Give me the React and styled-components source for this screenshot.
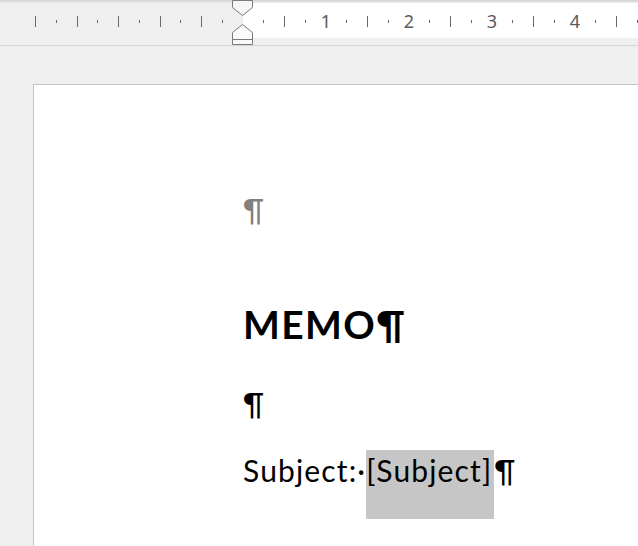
import React from 'react'
import styled, { createGlobalStyle } from 'styled-components'

const GlobalStyle = createGlobalStyle`
  html, body {
    margin: 0;
    padding: 0;
    width: 638px;
    height: 546px;
    overflow: hidden;
    background: #efefef;
  }
`

const Window = styled.div`
  width: 638px;
  height: 546px;
  display: flex;
  flex-direction: column;
  background: #efefef;
  overflow: hidden;
`

const RulerBar = styled.div`
  height: 45px;
  flex: none;
  border-bottom: 1px solid #d5d5d5;
  background: linear-gradient(#cfcfcf 0px, #e6e6e6 2px, #efefef 4px);
`

const Workspace = styled.div`
  flex: 1;
  padding: 38px 0 0 33px;
`

const Page = styled.div`
  width: 700px;
  height: 600px;
  background: #fff;
  border: 1px solid #c6c6c6;
  border-right: none;
  box-sizing: border-box;
  padding: 106px 0 0 209px;
  font-family: Lato, "Carlito", "Noto Sans", sans-serif;
  color: #000;
`

const Para = styled.div`
  font-size: ${p => p.size || 30}px;
  line-height: ${p => p.lh || 36}px;
  height: ${p => p.lh || 36}px;
  font-weight: ${p => (p.bold ? 700 : 400)};
  letter-spacing: ${p => p.track ?? 1.15}px;
  color: ${p => p.color || '#000'};
  margin-top: ${p => p.gap || 0}px;
  white-space: nowrap;
`

const Field = styled.span`
  display: inline-block;
  background: #c6c6c6;
  line-height: 36px;
  padding: 2px 2px 31px 0;
  margin-top: -2px;
  vertical-align: baseline;
`

const ORIGIN = 242.5
const STEP = 20.75

function Ruler() {
  const marks = []
  for (let k = -10; k <= 19; k++) {
    if (k === 0) continue
    const x = Math.round(ORIGIN + k * STEP) + 0.5
    if (k > 0 && k % 4 === 0) {
      marks.push(
        <text key={k} x={x - 0.5} y={28} textAnchor="middle" fontSize="18" fill="#5a5a5a"
          fontFamily="'Noto Sans', 'Open Sans', sans-serif">{k / 4}</text>
      )
    } else if (k % 2 === 0) {
      marks.push(<line key={k} x1={x} x2={x} y1={16} y2={27} stroke="#6a6a6a" strokeWidth="1" />)
    } else {
      marks.push(<line key={k} x1={x} x2={x} y1={20} y2={23} stroke="#6a6a6a" strokeWidth="1" />)
    }
  }
  return (
    <RulerBar>
      <svg width="638" height="45" viewBox="0 0 638 45" style={{ display: 'block' }}>
        <rect x="243" y="3" width="395" height="35" fill="#ffffff" />
        {marks}
        <path d="M232.5 0.5 H252.5 V7.5 L242.5 15.5 L232.5 7.5 Z" fill="#f6f6f6" stroke="#7a7a7a" />
        <path d="M242.5 24.5 L252.5 32.5 V44.5 H232.5 V32.5 Z" fill="#fafafa" stroke="#7a7a7a" />
        <line x1="232.5" x2="252.5" y1="39.5" y2="39.5" stroke="#7a7a7a" />
      </svg>
    </RulerBar>
  )
}

export default function App() {
  return (
    <Window>
      <GlobalStyle />
      <Ruler />
      <Workspace>
        <Page>
          <Para color="#808080">¶</Para>
          <Para size={39} lh={47} bold track={1.4} gap={74}>MEMO¶</Para>
          <Para gap={37}>¶</Para>
          <Para gap={31}>
            Subject:·<Field>[Subject]</Field>¶
          </Para>
        </Page>
      </Workspace>
    </Window>
  )
}
